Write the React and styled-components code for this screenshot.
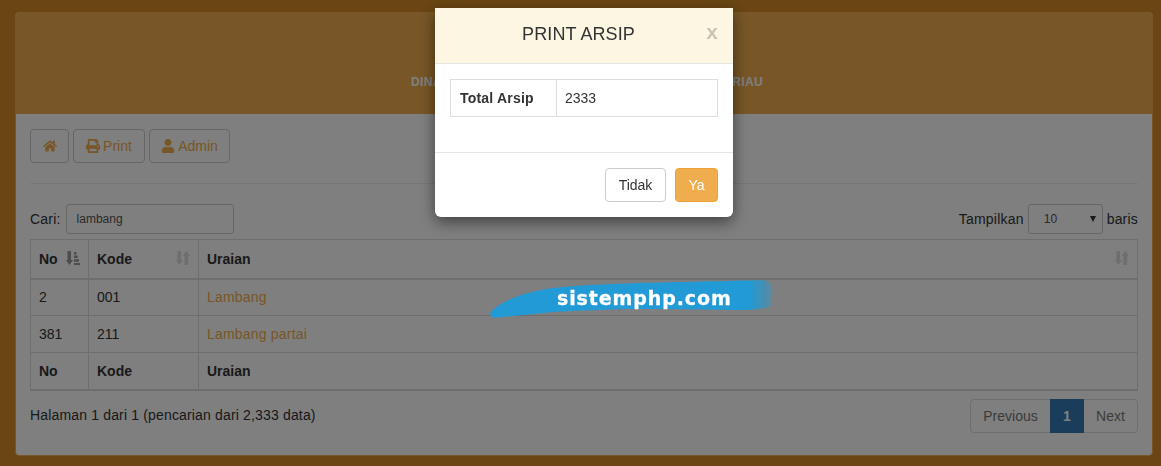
import styled, { createGlobalStyle } from "styled-components";
import { FaHome, FaPrint, FaUser } from "react-icons/fa";

const Global = createGlobalStyle`
  * { box-sizing: border-box; }
  html, body { margin: 0; height: 100%; }
  body {
    background: #d68b27;
    font-family: "Liberation Sans", Arial, sans-serif;
    font-size: 14px;
    line-height: 20px;
    color: #333;
    overflow: hidden;
  }
`;

const Page = styled.div`
  padding: 12px 8px 10px 15px;
  height: 466px;
`;

const Panel = styled.div`
  height: 444px;
  background: #fff;
  border-radius: 4px;
  border: 1px solid #f0ad4e;
  overflow: hidden;
`;

const Heading = styled.div`
  height: 101px;
  background: #f0ad4e;
  padding: 59px 0 0 6px;
  text-align: center;
  color: #fff;
  font-size: 12px;
  font-weight: bold;
  letter-spacing: 0.36px;
`;

const Body = styled.div`
  padding: 15px 14px;
`;

const Toolbar = styled.div`
  display: flex;
  gap: 4px;
`;

const Button = styled.button`
  width: ${(p) => p.$width};
  height: 34px;
  padding: 0;
  display: flex;
  align-items: center;
  justify-content: center;
  gap: 3px;
  background: #fff;
  border: 1px solid #ccc;
  border-radius: 4px;
  font: inherit;
  color: #f0ad4e;
`;

const Rule = styled.hr`
  margin: 20px 0 20px;
  border: 0;
  border-top: 1px solid #eee;
`;

const Controls = styled.div`
  display: flex;
  justify-content: space-between;
  align-items: center;
  height: 30px;
`;

const Field = styled.label`
  display: flex;
  align-items: center;
  gap: 5px;
  letter-spacing: 0.2px;
`;

const ShowField = styled(Field)`
  gap: 4px;
`;

const SearchInput = styled.input`
  width: 168px;
  height: 30px;
  padding: 5px 10px;
  border: 1px solid #ccc;
  border-radius: 3px;
  font: 12px "Liberation Sans", Arial, sans-serif;
  color: #555;
`;

const SizeSelect = styled.div`
  width: 75px;
  height: 30px;
  padding: 0 6px 0 15px;
  display: flex;
  align-items: center;
  justify-content: space-between;
  border: 1px solid #ccc;
  border-radius: 3px;
  font-size: 12px;
  color: #555;
  &::after {
    content: "";
    border-left: 3.5px solid transparent;
    border-right: 3.5px solid transparent;
    border-top: 6px solid #333;
  }
`;

const Table = styled.table`
  width: 1108px;
  margin-top: 5px;
  border-collapse: collapse;
  border: 1px solid #ddd;
  border-bottom-width: 2px;
  table-layout: fixed;
`;

const Head = styled.th`
  width: ${(p) => p.$width || "auto"};
  height: ${(p) => (p.$foot ? "37px" : "39px")};
  padding: 0 8px;
  border: 1px solid #ddd;
  border-bottom-width: 2px;
  text-align: left;
  position: relative;
`;

const Cell = styled.td`
  height: 37px;
  padding: 0 8px;
  border: 1px solid #ddd;
`;

const Link = styled.a`
  color: #f0ad4e;
  letter-spacing: 0.2px;
`;

const Sort = styled.svg`
  position: absolute;
  right: 8px;
  top: 11px;
  width: 14px;
  height: 14px;
  fill: ${(p) => (p.$active ? "#9a9a9a" : "#dcdcdc")};
`;

const Bottom = styled.div`
  display: flex;
  justify-content: space-between;
  margin-top: 8px;
`;

const Info = styled.div`
  padding-top: 6px;
  letter-spacing: 0.16px;
`;

const Pager = styled.div`
  display: flex;
  height: 34px;
  border: 1px solid #ddd;
  border-radius: 4px;
`;

const PageItem = styled.div`
  width: ${(p) => p.$width};
  margin: ${(p) => (p.$active ? "-1px 0" : "0")};
  display: flex;
  align-items: center;
  justify-content: center;
  background: ${(p) => (p.$active ? "#337ab7" : "transparent")};
  color: ${(p) => (p.$active ? "#fff" : "#777")};
  font-weight: ${(p) => (p.$active ? "bold" : "normal")};
`;

const Backdrop = styled.div`
  position: fixed;
  inset: 0;
  background: rgba(0, 0, 0, 0.5);
`;

const Modal = styled.div`
  position: fixed;
  left: 435px;
  top: 8px;
  width: 298px;
  height: 209px;
  background: #fff;
  border-radius: 0 0 6px 6px;
  box-shadow: 0 5px 15px rgba(0, 0, 0, 0.5);
  overflow: hidden;
`;

const ModalHead = styled.div`
  height: 56px;
  padding: 14px 11px 0 0;
  position: relative;
  background: #fcf6e3;
  border-bottom: 1px solid #e5e5e5;
  text-align: center;
  font-size: 18px;
  line-height: 25px;
  letter-spacing: 0.1px;
`;

const Close = styled.span`
  position: absolute;
  right: 15px;
  top: 11px;
  font-size: 21px;
  line-height: 25px;
  font-weight: bold;
  color: #000;
  opacity: 0.2;
`;

const ModalBody = styled.div`
  height: 89px;
  padding: 15px;
  border-bottom: 1px solid #e5e5e5;
`;

const InfoTable = styled.table`
  width: 100%;
  border-collapse: collapse;
  table-layout: fixed;
`;

const InfoLabel = styled.th`
  width: 106px;
  height: 37px;
  padding: 0 9px;
  border: 1px solid #ddd;
  text-align: left;
  letter-spacing: 0.2px;
`;

const InfoValue = styled.td`
  padding: 0 8px;
  border: 1px solid #ddd;
`;

const ModalFoot = styled.div`
  display: flex;
  justify-content: flex-end;
  gap: 9px;
  padding: 15px;
`;

const FootButton = styled.button`
  width: ${(p) => p.$width};
  height: 34px;
  padding: 0;
  border: 1px solid ${(p) => (p.$primary ? "#eea236" : "#ccc")};
  border-radius: 4px;
  background: ${(p) => (p.$primary ? "#f0ad4e" : "#fff")};
  color: ${(p) => (p.$primary ? "#fff" : "#333")};
  font: inherit;
`;

const Watermark = styled.div`
  position: fixed;
  left: 488px;
  top: 278px;
  width: 286px;
  height: 42px;
`;

const Brush = styled.svg`
  display: block;
  width: 100%;
  height: 100%;
`;

const WatermarkText = styled.span`
  position: absolute;
  left: 69px;
  top: 8px;
  font-family: "DejaVu Sans", sans-serif;
  font-weight: bold;
  font-size: 19px;
  line-height: 24px;
  letter-spacing: 0.9px;
  color: #fff;
  -webkit-text-stroke: 0.3px #fff;
`;

const SortIcon = ({ active }) => (
  <Sort viewBox="0 0 14 14" $active={active}>
    {active ? (
      <path d="M1.500 0h3.500v9h2l-3.700 5L0 9h1.500zM8 12h6v2H8zM8 8.300h5v2.500H8zM8 4.600h3.700v2.500H8zM8 1h2.500v2.500H8z" />
    ) : (
      <path d="M1.500 0h3.500v9h2l-3.700 5L0 9h1.500zM8.500 14V5H6.800l3.700-5L14 5h-1.800v9z" />
    )}
  </Sort>
);

export default function App() {
  return (
    <>
      <Global />
      <Page>
        <Panel>
          <Heading>DINAS PERPUSTAKAAN DAN KEARSIPAN PROVINSI RIAU</Heading>
          <Body>
            <Toolbar>
              <Button $width="39px"><FaHome /></Button>
              <Button $width="72px"><FaPrint /> Print</Button>
              <Button $width="81px"><FaUser /> Admin</Button>
            </Toolbar>
            <Rule />
            <Controls>
              <Field>Cari: <SearchInput defaultValue="lambang" /></Field>
              <ShowField>Tampilkan <SizeSelect>10</SizeSelect> baris</ShowField>
            </Controls>
            <Table>
              <thead>
                <tr>
                  <Head $width="58px">No<SortIcon active /></Head>
                  <Head $width="110px">Kode<SortIcon /></Head>
                  <Head>Uraian<SortIcon /></Head>
                </tr>
              </thead>
              <tbody>
                <tr>
                  <Cell>2</Cell>
                  <Cell>001</Cell>
                  <Cell><Link>Lambang</Link></Cell>
                </tr>
                <tr>
                  <Cell>381</Cell>
                  <Cell>211</Cell>
                  <Cell><Link>Lambang partai</Link></Cell>
                </tr>
              </tbody>
              <tfoot>
                <tr>
                  <Head $foot>No</Head>
                  <Head $foot>Kode</Head>
                  <Head $foot>Uraian</Head>
                </tr>
              </tfoot>
            </Table>
            <Bottom>
              <Info>Halaman 1 dari 1 (pencarian dari 2,333 data)</Info>
              <Pager>
                <PageItem $width="79px">Previous</PageItem>
                <PageItem $width="34px" $active>1</PageItem>
                <PageItem $width="53px">Next</PageItem>
              </Pager>
            </Bottom>
          </Body>
        </Panel>
      </Page>
      <Backdrop />
      <Modal>
        <ModalHead>
          PRINT ARSIP
          <Close>x</Close>
        </ModalHead>
        <ModalBody>
          <InfoTable>
            <tbody>
              <tr>
                <InfoLabel>Total Arsip</InfoLabel>
                <InfoValue>2333</InfoValue>
              </tr>
            </tbody>
          </InfoTable>
        </ModalBody>
        <ModalFoot>
          <FootButton $width="61px">Tidak</FootButton>
          <FootButton $width="43px" $primary>Ya</FootButton>
        </ModalFoot>
      </Modal>
      <Watermark>
        <Brush viewBox="0 0 286 42">
          <defs>
            <linearGradient id="brushFade" x1="0" x2="1" y1="0" y2="0">
              <stop offset="0.92" stopColor="#219ad5" />
              <stop offset="1" stopColor="#219ad5" stopOpacity="0.35" />
            </linearGradient>
            <filter id="brushBlur" x="-5%" y="-20%" width="110%" height="140%">
              <feGaussianBlur stdDeviation="0.7" />
            </filter>
          </defs>
          <path
            d="M2 35 C8 28 16 24 25 20 C38 15 50 12 65 10 C95 7 120 6 149 5 C190 4 240 3 275 2 C282 3 285 8 284 12 C285 18 284 25 282 29 C270 32 255 32 242 32 C210 31 180 31 149 31 C120 31 90 33 65 34 C45 36 25 38 5 40 C3 38 2 37 2 35 Z"
            fill="url(#brushFade)"
            filter="url(#brushBlur)"
          />
        </Brush>
        <WatermarkText>sistemphp.com</WatermarkText>
      </Watermark>
    </>
  );
}
